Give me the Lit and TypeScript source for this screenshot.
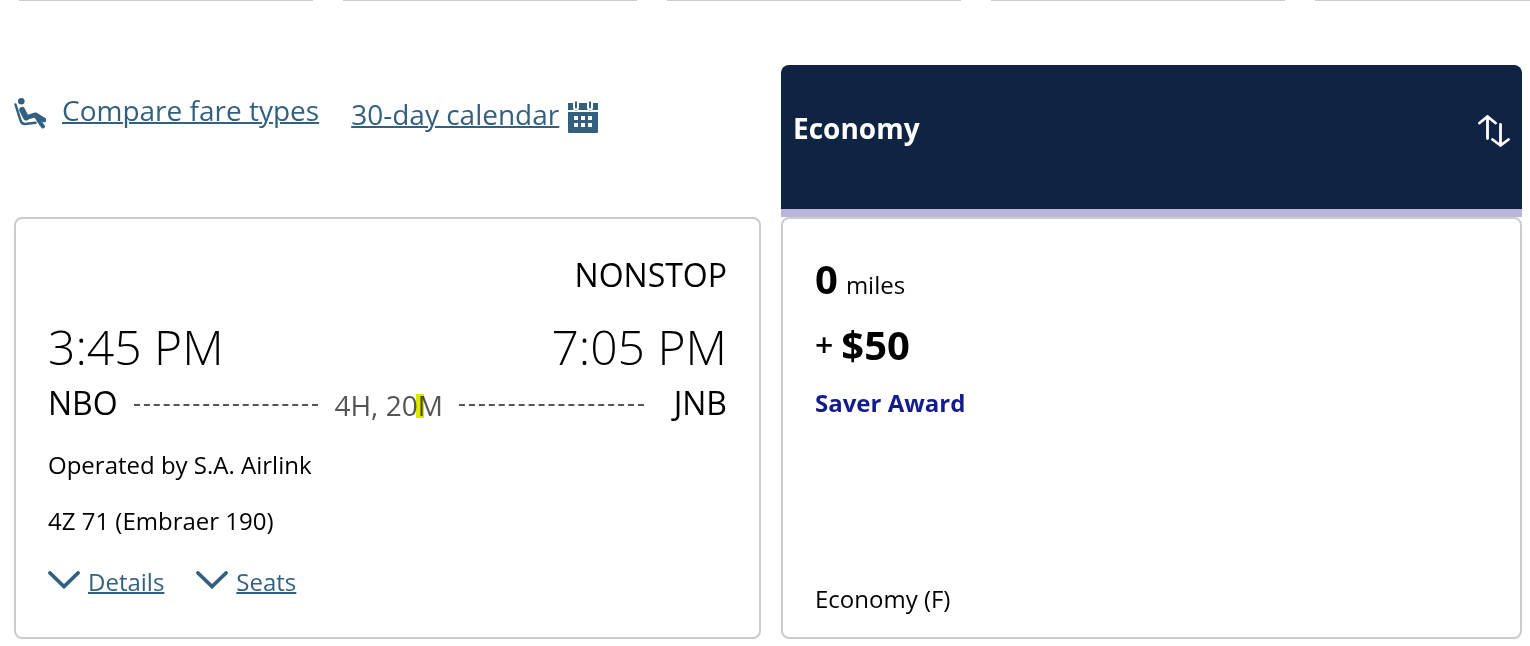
import { LitElement, html, css, svg } from "lit";
import { customElement } from "lit/decorators.js";

const seatIcon = html`<svg width="32" height="32" viewBox="0 0 32 32" aria-hidden="true">
  <g fill="none" stroke="currentColor" stroke-linecap="round" stroke-linejoin="round">
    <path d="M1.500 7.500 L6.500 23.500 Q7.700 27 11 26.900 L21.500 25.800" stroke-width="2.500" />
    <path d="M8.200 13 L12 20.500" stroke-width="6" />
    <path d="M12 20.700 L21.500 17.800 L30 23" stroke-width="4.600" />
    <path d="M22 19 L25 24 L29 29.500" stroke-width="4" />
  </g>
  <circle cx="7.300" cy="4.300" r="3.300" fill="currentColor" />
</svg>`;

const calendarIcon = html`<svg width="30" height="32" viewBox="0 0 30 32" aria-hidden="true">
  <path fill="currentColor" d="M0 2h5v4.500a3 3 0 0 0 6 0V2h8v4.500a3 3 0 0 0 6 0V2h5v7H0z" />
  <path d="M8 1.200v5.300M22 1.200v5.300" stroke="currentColor" stroke-width="2" stroke-linecap="round" />
  <path fill="currentColor" d="M0 11h30v20a1 1 0 0 1-1 1H1a1 1 0 0 1-1-1z" />
  <g fill="#fff">
    ${[6, 13, 20].map((x) => svg`<rect x=${x} y="15" width="4" height="4" /><rect x=${x} y="22" width="4" height="4" />`)}
  </g>
</svg>`;

const sortIcon = html`<svg width="32" height="32" viewBox="0 0 32 32" aria-hidden="true">
  <path d="M9.500 23.500V1.500M1.500 8l8-6.500 8 6.500M22.500 9.500v21M14.500 24.500l8 6 8-6" fill="none"
    stroke="currentColor" stroke-width="2.800" stroke-linecap="round" stroke-linejoin="round" />
</svg>`;

const chevronIcon = html`<svg width="32" height="18" viewBox="0 0 32 18" aria-hidden="true">
  <path d="M2 2L16 15.500 30 2" fill="none" stroke="currentColor" stroke-width="3.800" stroke-linecap="round" />
</svg>`;

@customElement("app-root")
export class AppRoot extends LitElement {
  static styles = css`
    :host {
      display: block;
      overflow: hidden;
      background: #fff;
      color: #000;
      font-family: "Open Sans", "Noto Sans", sans-serif;
      font-size: 24px;
      line-height: 32px;
    }
    * {
      box-sizing: border-box;
    }
    p, h2 {
      margin: 0;
    }
    svg {
      display: block;
      flex: none;
    }
    a {
      color: #33607f;
      text-decoration-thickness: 2px;
    }
    .dates {
      display: flex;
      gap: 30px;
      padding-left: 19px;
      margin-bottom: 64px;
      overflow: hidden;
    }
    .date {
      flex: 0 0 294px;
      border-bottom: 1px solid #ccc;
    }
    .results {
      display: grid;
      grid-template-columns: minmax(0, 747fr) minmax(0, 741fr);
      column-gap: 20px;
      padding: 0 8px 8px 14px;
    }
    .tools {
      display: flex;
      align-items: flex-start;
      gap: 32px;
      padding-top: 29px;
      color: #33607f;
      font-size: 28px;
    }
    .tool {
      display: flex;
      align-items: flex-start;
      line-height: 32px;
    }
    .tool svg {
      margin-top: 3px;
    }
    .compare {
      gap: 16px;
    }
    .calendar {
      gap: 9px;
      padding-top: 4px;
    }
    .cabin {
      display: flex;
      align-items: center;
      justify-content: space-between;
      height: 152px;
      padding: 0 12px 18px;
      border-bottom: 8px solid #b8b7da;
      border-radius: 8px 8px 0 0;
      background: #0f2342;
      color: #fff;
    }
    .cabin h2 {
      font-size: 28px;
      line-height: 36px;
    }
    .sort {
      padding: 6px 0 0;
      border: 0;
      background: none;
      color: inherit;
    }
    .card {
      display: flex;
      flex-direction: column;
      padding: 34px 32px;
      border: 2px solid #ccc;
      border-radius: 8px;
    }
    .stops {
      text-align: right;
      font-size: 32px;
      line-height: 44px;
      margin-bottom: 16px;
    }
    .times {
      display: flex;
      justify-content: space-between;
      font-size: 48px;
      font-weight: 300;
      line-height: 68px;
    }
    .route {
      display: flex;
      align-items: center;
      gap: 16px;
      height: 44px;
      font-size: 32px;
      line-height: 44px;
    }
    .dash {
      flex: 1;
      margin-top: 4px;
      border-top: 2px dashed #555;
    }
    .destination {
      padding-left: 14px;
    }
    .duration {
      padding-top: 4px;
      color: #555;
      font-size: 28px;
    }
    .cursor {
      position: relative;
    }
    .cursor::before {
      content: "";
      position: absolute;
      left: -2px;
      top: 8px;
      width: 8px;
      height: 24px;
      background: #dfe800;
      mix-blend-mode: multiply;
    }
    .note {
      margin-top: 24px;
    }
    .more {
      display: flex;
      gap: 32px;
      margin-top: 24px;
    }
    .toggle {
      display: flex;
      align-items: center;
      gap: 8px;
      height: 42px;
      color: #33607f;
    }
    .toggle svg {
      margin-bottom: 4px;
    }
    .fare {
      padding-top: 35px;
      padding-bottom: 22px;
    }
    .price {
      display: flex;
      align-items: baseline;
      gap: 8px;
      height: 50px;
      line-height: 50px;
      margin-bottom: 16px;
    }
    .cash {
      align-items: center;
    }
    .amount {
      font-size: 40px;
      font-weight: 700;
    }
    .plus {
      font-size: 32px;
      font-weight: 600;
    }
    .award {
      color: #141b8c;
      font-weight: 700;
      line-height: 34px;
    }
    .class {
      margin-top: auto;
    }
  `;

  render() {
    return html`
      <div class="dates">${[0, 1, 2, 3, 4].map(() => html`<div class="date"></div>`)}</div>
      <main class="results">
        <nav class="tools">
          <span class="tool compare">${seatIcon}<a href="#compare">Compare fare types</a></span>
          <span class="tool calendar"><a href="#calendar">30-day calendar</a>${calendarIcon}</span>
        </nav>
        <header class="cabin">
          <h2>Economy</h2>
          <button class="sort" aria-label="Sort by Economy fare">${sortIcon}</button>
        </header>
        <section class="card">
          <p class="stops">NONSTOP</p>
          <div class="times"><span>3:45 PM</span><span>7:05 PM</span></div>
          <div class="route">
            <span>NBO</span><span class="dash"></span>
            <span class="duration">4H, 20<span class="cursor">M</span></span>
            <span class="dash"></span><span class="destination">JNB</span>
          </div>
          <p class="note">Operated by S.A. Airlink</p>
          <p class="note">4Z 71 (Embraer 190)</p>
          <div class="more">
            <span class="toggle">${chevronIcon}<a href="#details">Details</a></span>
            <span class="toggle">${chevronIcon}<a href="#seats">Seats</a></span>
          </div>
        </section>
        <section class="card fare">
          <p class="price"><span class="amount">0</span> <span>miles</span></p>
          <p class="price cash"><span class="plus">+</span> <span class="amount">$50</span></p>
          <p class="award">Saver Award</p>
          <p class="class">Economy (F)</p>
        </section>
      </main>
    `;
  }
}
